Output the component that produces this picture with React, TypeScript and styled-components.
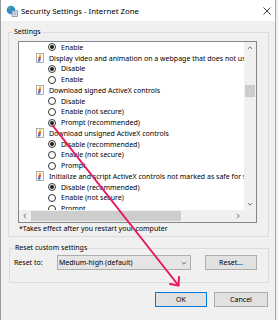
import React from "react";
import styled, { createGlobalStyle } from "styled-components";

const Global = createGlobalStyle`
  html, body { margin: 0; padding: 0; background: #f0f0f0; }
  body { font-family: "Noto Sans", "Open Sans", sans-serif; -webkit-font-smoothing: antialiased; }
  #root { width: 278px; height: 320px; overflow: hidden; }
`;

const Page = styled.div`
  position: relative;
  width: 278px;
  height: 320px;
  overflow: hidden;
`;

const Window = styled.div`
  width: 276px;
  height: 320px;
  box-sizing: border-box;
  border-left: 1px solid #9c9c9c;
  border-right: 1px solid #a8a8a8;
  background: #f0f0f0;
  display: flex;
  flex-direction: column;
  color: #000;
  font-family: "Noto Sans", "Open Sans", sans-serif;
`;

const TitleBar = styled.div`
  height: 21px;
  flex: none;
  background: #ffffff;
  display: flex;
  align-items: center;
  padding: 0 3px 0 5px;
`;

const TitleText = styled.span`
  font-size: 7.8px;
  line-height: 10px;
  margin-left: 3px;
  white-space: nowrap;
`;

const CloseBtn = styled.div`
  margin-left: auto;
  width: 8px;
  height: 8px;
  display: flex;
  margin-right: 1px;
`;

const Body = styled.div`
  flex: 1;
  padding: 11px 6px 0 7px;
  display: flex;
  flex-direction: column;
`;

const GroupBox = styled.div<{ $shift?: number; $pad: string }>`
  position: relative;
  border: 1px solid #dcdcdc;
  margin-left: ${(p) => p.$shift ?? 0}px;
  padding: ${(p) => p.$pad};
`;

const Legend = styled.span`
  position: absolute;
  top: -6px;
  left: 4px;
  padding: 0 1px;
  background: #f0f0f0;
  font-size: 7px;
  line-height: 10px;
  white-space: nowrap;
`;

const ListBox = styled.div`
  height: 182px;
  box-sizing: border-box;
  border: 1px solid #828790;
  background: #ffffff;
  display: grid;
  grid-template-columns: 1fr 12px;
  grid-template-rows: 1fr 12px;
  overflow: hidden;
`;

const Rows = styled.div`
  overflow: hidden;
  min-width: 0;
`;

const Row = styled.div<{ $indent: number }>`
  height: 10.75px;
  display: flex;
  align-items: center;
  gap: 5px;
  padding-left: ${(p) => p.$indent}px;
  font-size: 7px;
  white-space: nowrap;
`;

const Radio = styled.span<{ $on?: boolean }>`
  width: 8px;
  height: 8px;
  flex: none;
  box-sizing: border-box;
  border-radius: 50%;
  border: 1px solid #333333;
  background: #ffffff;
  display: flex;
  align-items: center;
  justify-content: center;
  &::after {
    content: "";
    width: 4px;
    height: 4px;
    border-radius: 50%;
    background: ${(p) => (p.$on ? "#1a1a1a" : "transparent")};
  }
`;

const VScroll = styled.div`
  background: #f0f0f0;
  display: flex;
  flex-direction: column;
`;

const HScroll = styled.div`
  background: #f0f0f0;
  display: flex;
  align-items: center;
`;

const Corner = styled.div`
  background: #f0f0f0;
`;

const ArrowCell = styled.div`
  width: 12px;
  height: 12px;
  flex: none;
  display: flex;
  align-items: center;
  justify-content: center;
`;

const VTrack = styled.div`
  flex: 1;
  display: flex;
  flex-direction: column;
  align-items: center;
`;

const VThumb = styled.div`
  width: 10px;
  height: 12px;
  background: #cdcdcd;
`;

const HTrack = styled.div`
  flex: 1;
  display: flex;
  align-items: center;
`;

const HThumb = styled.div`
  height: 10px;
  background: #cdcdcd;
`;

const Note = styled.div`
  margin: 1px 0 0 1px;
  font-size: 7px;
  line-height: 10px;
  white-space: nowrap;
`;

const ResetRow = styled.div`
  display: flex;
  align-items: center;
  height: 15px;
`;

const Label = styled.span`
  width: 43px;
  flex: none;
  font-size: 7px;
  line-height: 10px;
`;

const Select = styled.div`
  width: 134px;
  height: 15px;
  box-sizing: border-box;
  border: 1px solid #adadad;
  background: #e5e5e5;
  display: flex;
  align-items: center;
  padding: 0 3px 0 1px;
  font-size: 7px;
  white-space: nowrap;
`;

const SelectIcon = styled.span`
  margin-left: auto;
  display: flex;
`;

const Button = styled.div<{ $w: number; $default?: boolean }>`
  width: ${(p) => p.$w}px;
  height: 15px;
  box-sizing: border-box;
  border: 1px solid ${(p) => (p.$default ? "#0078d7" : "#adadad")};
  background: #e1e1e1;
  display: flex;
  align-items: center;
  justify-content: center;
  font-size: 7px;
  flex: none;
`;

const PushRight = styled.div`
  margin-left: auto;
  display: flex;
`;

const ButtonRow = styled.div`
  margin: 9px 1px 0 0;
  display: flex;
  justify-content: flex-end;
  gap: 7px;
`;

const Overlay = styled.svg`
  position: absolute;
  left: 0;
  top: 0;
  pointer-events: none;
`;

const Chevron = ({ dir }: { dir: "up" | "down" | "left" | "right" }) => {
  const rot = { up: 0, down: 180, left: -90, right: 90 }[dir];
  return (
    <svg width="6" height="6" viewBox="0 0 6 6">
      <polyline
        points="0.8,4 3,1.8 5.2,4"
        fill="none"
        stroke="#606060"
        strokeWidth="0.9"
        transform={`rotate(${rot} 3 3)`}
      />
    </svg>
  );
};

const ZoneIcon = () => (
  <svg width="12" height="12" viewBox="0 0 12 12">
    <circle cx="5" cy="5" r="4.3" fill="#2e8bd0" />
    <path d="M2.2 3.2 C3 2 4.5 1.6 5.2 2.4 C5 3.4 3.8 3.6 3.6 4.6 C3 5 2.2 4.6 2.2 3.2Z" fill="#4fb35a" />
    <path d="M5.8 5.2 C6.8 4.8 7.8 5.6 7.4 6.8 C6.8 7.6 5.6 7.4 5.8 5.2Z" fill="#4fb35a" />
    <rect x="6" y="6" width="5.5" height="5.5" fill="#dbe6f1" stroke="#7b90a8" strokeWidth="0.8" />
    <line x1="7.2" y1="8" x2="10.3" y2="8" stroke="#7b90a8" strokeWidth="0.6" />
    <line x1="7.2" y1="9.5" x2="10.3" y2="9.5" stroke="#7b90a8" strokeWidth="0.6" />
  </svg>
);

const SettingIcon = () => (
  <svg width="8" height="10" viewBox="0 0 8 10" style={{ flex: "none" }}>
    <rect x="0.5" y="0.5" width="7" height="9" fill="#ffffff" stroke="#9a9a9a" strokeWidth="0.8" />
    <path d="M3.2 1.6 L5.6 1.6 L5 4 L2.6 4Z" fill="#f2c00e" />
    <path d="M2.6 4 L5 4 L4.6 6.2 L2.2 6.2Z" fill="#e2402c" />
    <path d="M2.2 6.2 L4.6 6.2 L4.2 8.4 L1.8 8.4Z" fill="#3b66d4" />
  </svg>
);

type Item = { kind: "head" | "radio"; text: string; on?: boolean };

const items: Item[] = [
  { kind: "radio", text: "Enable", on: true },
  { kind: "head", text: "Display video and animation on a webpage that does not use external media player" },
  { kind: "radio", text: "Disable", on: true },
  { kind: "radio", text: "Enable" },
  { kind: "head", text: "Download signed ActiveX controls" },
  { kind: "radio", text: "Disable" },
  { kind: "radio", text: "Enable (not secure)" },
  { kind: "radio", text: "Prompt (recommended)", on: true },
  { kind: "head", text: "Download unsigned ActiveX controls" },
  { kind: "radio", text: "Disable (recommended)", on: true },
  { kind: "radio", text: "Enable (not secure)" },
  { kind: "radio", text: "Prompt" },
  { kind: "head", text: "Initialize and script ActiveX controls not marked as safe for scripting" },
  { kind: "radio", text: "Disable (recommended)", on: true },
  { kind: "radio", text: "Enable (not secure)" },
  { kind: "radio", text: "Prompt" },
];

export default function App() {
  const vThumbTop = 31;
  const hThumbWidth = 150;
  return (
    <Page>
      <Global />
      <Window>
        <TitleBar>
          <ZoneIcon />
          <TitleText>Security Settings - Internet Zone</TitleText>
          <CloseBtn>
            <svg width="8" height="8" viewBox="0 0 8 8">
              <path d="M0.5 0.5 L7.5 7.5 M7.5 0.5 L0.5 7.5" stroke="#111" strokeWidth="0.8" />
            </svg>
          </CloseBtn>
        </TitleBar>
        <Body>
          <GroupBox $pad="8px 11px 2px 9px">
            <Legend>Settings</Legend>
            <ListBox>
              <Rows>
                {items.map((it, i) =>
                  it.kind === "head" ? (
                    <Row key={i} $indent={17}>
                      <SettingIcon />
                      <span>{it.text}</span>
                    </Row>
                  ) : (
                    <Row key={i} $indent={29}>
                      <Radio $on={it.on} />
                      <span>{it.text}</span>
                    </Row>
                  )
                )}
              </Rows>
              <VScroll>
                <ArrowCell>
                  <Chevron dir="up" />
                </ArrowCell>
                <VTrack>
                  <VThumb style={{ marginTop: vThumbTop }} />
                </VTrack>
                <ArrowCell>
                  <Chevron dir="down" />
                </ArrowCell>
              </VScroll>
              <HScroll>
                <ArrowCell>
                  <Chevron dir="left" />
                </ArrowCell>
                <HTrack>
                  <HThumb style={{ width: hThumbWidth }} />
                </HTrack>
                <ArrowCell>
                  <Chevron dir="right" />
                </ArrowCell>
              </HScroll>
              <Corner />
            </ListBox>
            <Note>*Takes effect after you restart your computer</Note>
          </GroupBox>
          <GroupBox $shift={1} $pad="6px 11px 12px 4px" style={{ marginTop: 11 }}>
            <Legend>Reset custom settings</Legend>
            <ResetRow>
              <Label>Reset to:</Label>
              <Select>
                Medium-high (default)
                <SelectIcon>
                  <Chevron dir="down" />
                </SelectIcon>
              </Select>
              <PushRight>
                <Button $w={52}>Reset...</Button>
              </PushRight>
            </ResetRow>
          </GroupBox>
          <ButtonRow>
            <Button $w={52} $default>
              OK
            </Button>
            <Button $w={54}>Cancel</Button>
          </ButtonRow>
        </Body>
      </Window>
      <Overlay width="278" height="320" viewBox="0 0 278 320">
        <g stroke="#e8185e" strokeWidth="2" strokeLinecap="round" fill="none">
          <line x1="53" y1="126" x2="178.5" y2="285.5" />
          <polyline points="179,277 178.5,285.5 170,284" strokeLinejoin="round" />
        </g>
      </Overlay>
    </Page>
  );
}
